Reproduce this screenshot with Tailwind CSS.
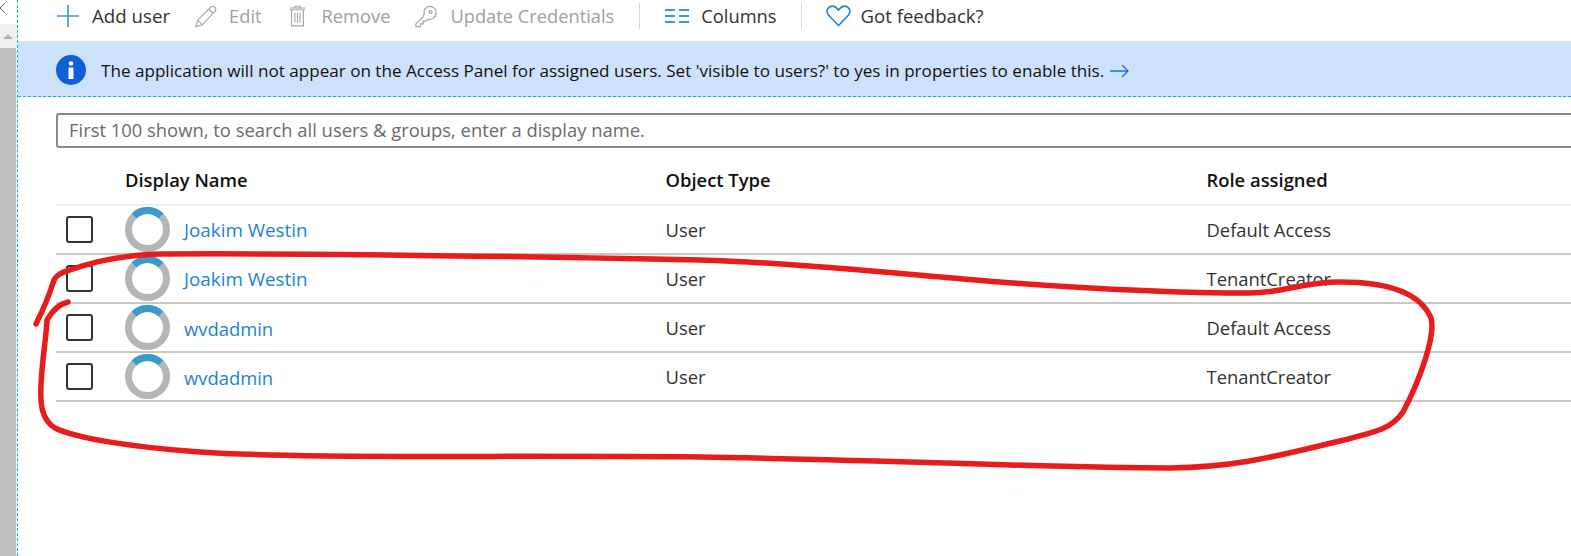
<!DOCTYPE html>
<html lang="en">
<head>
  <meta charset="UTF-8" />
  <title>Users and groups</title>
  <script src="https://cdn.jsdelivr.net/npm/@tailwindcss/browser@4"></script>
</head>
<body class="relative h-[556px] w-[1571px] overflow-hidden bg-white font-['Open_Sans','Noto_Sans',sans-serif] text-[18.3px] text-[#323232]">
  <div class="flex h-[556px]">
    <!-- left scrollbar -->
    <div class="flex w-[17px] shrink-0 flex-col">
      <div class="relative h-6 bg-white">
        <svg class="absolute left-0 top-[2px]" width="6" height="12" viewBox="0 0 6 12" fill="none" stroke="#555" stroke-width="1"><path d="M5 1 0 6l5 5"/></svg>
      </div>
      <div class="flex h-6 items-center justify-center bg-[#f0f0f0] pr-[2px]">
        <div class="h-0 w-0 border-x-[5px] border-b-[5px] border-x-transparent border-b-[#b4b4b4]"></div>
      </div>
      <div class="flex-1 border-r border-r-[#f0f0f0] bg-[#c0c0c0]"></div>
    </div>

    <div class="min-w-0 flex-1 border-l border-dashed border-l-[#00b7ef]">
      <!-- toolbar -->
      <div class="flex h-[43px] items-center whitespace-nowrap border-b-2 border-b-[#e1e1e1] pb-[9px] pl-[38px]">
        <svg class="mr-[12px]" width="24" height="24" viewBox="0 0 24 24" stroke="#3a96dd" stroke-width="1.6"><path d="M12 1v22M1 12h22"/></svg>
        <span class="mr-[24px] text-[18.7px]">Add user</span>
        <svg class="mr-[11px]" width="24" height="25" viewBox="0 0 26 26" fill="none" stroke="#a6a6a6" stroke-width="1.3"><path d="M2 24l2-7L18 3c1.500-1.500 3-1.500 4.500 0s1.500 3 0 4.500L9 22zM4 17l5 5M16 5l5 5"/></svg>
        <span class="mr-[27px] text-[#a0a0a0]">Edit</span>
        <svg class="mr-[16px]" width="17" height="25" viewBox="0 0 20 26" fill="none" stroke="#a6a6a6" stroke-width="1.300"><path d="M1 5h18M1 3h18M7 3V1h6v2M3 5v19h14V5M7 9v11M10 9v11M13 9v11"/></svg>
        <span class="mr-[24px] text-[#a0a0a0]">Remove</span>
        <svg class="mr-[12px]" width="24" height="25" viewBox="0 0 26 26" fill="none" stroke="#a6a6a6" stroke-width="1.3"><path d="M10 13 2 21v3h5v-3h3v-3h3l2-2c4 1 9-2 9-7 0-4-3-7-7-7s-7 4-6 8zM18 6.500a1.500 1.500 0 1 0 .01 0"/></svg>
        <span class="text-[#a0a0a0]">Update Credentials</span>
        <div class="mx-[25px] h-[26px] w-[1px] bg-[#d8d8d8]"></div>
        <svg class="mr-[12px]" width="24" height="16" viewBox="0 0 24 16" stroke="#3a96dd" stroke-width="2"><path d="M0 2h10M14 2h10M0 8h10M14 8h10M0 14h10M14 14h10"/></svg>
        <span>Columns</span>
        <div class="ml-[24px] mr-[24px] h-[26px] w-[1px] bg-[#d8d8d8]"></div>
        <svg class="mr-[10px]" width="25" height="22" viewBox="0 0 25 22" fill="none" stroke="#1d86d8" stroke-width="1.6"><path d="M12.500 20.500 2.500 10C0 7 1 3.500 3.500 2c2.500-1.500 6-1 9 3 3-4 6.500-4.500 9-3 2.500 1.500 3.500 5 1 8z"/></svg>
        <span class="text-[18.6px]">Got feedback?</span>
      </div>

      <!-- info banner -->
      <div class="flex h-[54px] items-center whitespace-nowrap border-b border-dashed border-b-[#00b7ef] bg-[#cfe2fd] pl-[38px] pt-[2px] text-[17.1px] text-[#111]">
        <svg class="-mt-[2px] mr-[15px]" width="30" height="30" viewBox="0 0 30 30"><circle cx="15" cy="15" r="15" fill="#0f5fd7"/><circle cx="15" cy="8.500" r="2.300" fill="#fff"/><rect x="12.500" y="12.500" width="5" height="11.500" fill="#fff"/></svg>
        <span>The application will not appear on the Access Panel for assigned users. Set 'visible to users?' to yes in properties to enable this.</span>
        <svg class="ml-[6px]" width="19" height="14" viewBox="0 0 19 14" fill="none" stroke="#1d6fd8" stroke-width="1.3"><path d="M0 7h18M12 1l6 6-6 6"/></svg>
      </div>

      <!-- search -->
      <div class="pl-[38px] pt-4">
        <div class="flex h-[35px] w-[1600px] items-center rounded-[3px] border-2 border-[#888] pb-[2px] pl-[11px] text-[18.4px] text-[#6b6b6b]">First 100 shown, to search all users &amp; groups, enter a display name.</div>
      </div>

      <!-- table -->
      <div class="pl-[38px] pt-[17px] text-[18.4px]">
        <div class="grid h-[41px] grid-cols-[69px_540.5px_541px_1fr] items-center border-b-2 border-b-[#eeeeee] pb-[10px] font-semibold text-[#111]">
          <span></span><span>Display Name</span><span>Object Type</span><span>Role assigned</span>
        </div>

        <div class="grid h-[49px] grid-cols-[69px_540.5px_541px_1fr] items-center border-b-2 border-b-[#c8c8c8]">
          <div class="ml-[10px] h-[27px] w-[27px] rounded-[3px] border-2 border-[#333]"></div>
          <div class="flex items-center gap-[14px]">
            <svg width="45" height="45" viewBox="0 0 45 45" fill="none" stroke-width="7"><circle cx="22.500" cy="22.500" r="19" stroke="#b3b5b7"/><path d="M9.100 9a19 19 0 0 1 26.800 0" stroke="#3b9ac9"/></svg>
            <span class="pt-[2px] text-[18.8px] text-[#1a83d8]">Joakim Westin</span>
          </div>
          <span>User</span><span>Default Access</span>
        </div>
        <div class="grid h-[49px] grid-cols-[69px_540.5px_541px_1fr] items-center border-b-2 border-b-[#c8c8c8]">
          <div class="ml-[10px] h-[27px] w-[27px] rounded-[3px] border-2 border-[#333]"></div>
          <div class="flex items-center gap-[14px]">
            <svg width="45" height="45" viewBox="0 0 45 45" fill="none" stroke-width="7"><circle cx="22.500" cy="22.500" r="19" stroke="#b3b5b7"/><path d="M9.100 9a19 19 0 0 1 26.800 0" stroke="#3b9ac9"/></svg>
            <span class="pt-[2px] text-[18.8px] text-[#1a83d8]">Joakim Westin</span>
          </div>
          <span>User</span><span>TenantCreator</span>
        </div>
        <div class="grid h-[49px] grid-cols-[69px_540.5px_541px_1fr] items-center border-b-2 border-b-[#c8c8c8]">
          <div class="ml-[10px] h-[27px] w-[27px] rounded-[3px] border-2 border-[#333]"></div>
          <div class="flex items-center gap-[14px]">
            <svg width="45" height="45" viewBox="0 0 45 45" fill="none" stroke-width="7"><circle cx="22.500" cy="22.500" r="19" stroke="#b3b5b7"/><path d="M9.100 9a19 19 0 0 1 26.800 0" stroke="#3b9ac9"/></svg>
            <span class="pt-[2px] text-[#1a83d8]">wvdadmin</span>
          </div>
          <span>User</span><span>Default Access</span>
        </div>
        <div class="grid h-[49px] grid-cols-[69px_540.5px_541px_1fr] items-center border-b-2 border-b-[#c8c8c8]">
          <div class="ml-[10px] h-[27px] w-[27px] rounded-[3px] border-2 border-[#333]"></div>
          <div class="flex items-center gap-[14px]">
            <svg width="45" height="45" viewBox="0 0 45 45" fill="none" stroke-width="7"><circle cx="22.500" cy="22.500" r="19" stroke="#b3b5b7"/><path d="M9.100 9a19 19 0 0 1 26.800 0" stroke="#3b9ac9"/></svg>
            <span class="pt-[2px] text-[#1a83d8]">wvdadmin</span>
          </div>
          <span>User</span><span>TenantCreator</span>
        </div>
      </div>
    </div>
  </div>

  <!-- hand drawn annotation -->
  <svg class="absolute left-0 top-0" width="1571" height="556" viewBox="0 0 1571 556" fill="none" stroke="#e81c1c" stroke-width="5.500" stroke-linecap="round" stroke-linejoin="round">
    <path d="M36 324C42 312 49 296 54 280C57 275 60 273 70 270C95 261 125 255 160 254C300 253 500 256 700 260C800 263 900 274 1000 282C1080 288 1160 293 1250 293C1285 293 1300 282 1340 282C1385 282 1420 292 1431 318C1436 335 1420 380 1403 412C1392 428 1380 431 1340 441C1280 455 1240 467 1170 468C1050 468 900 460 700 457C500 455 300 459 200 452C130 447 75 438 55 428C42 420 40 405 41 385C42 360 46 340 47 320C52 311 60 304 68 302"/>
  </svg>
</body>
</html>
